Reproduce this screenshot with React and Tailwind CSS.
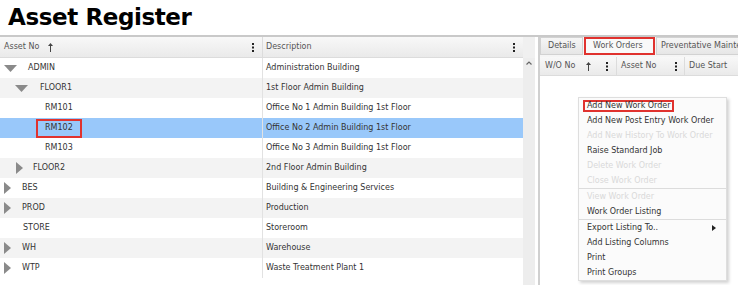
import React from 'react';

const rows = [
    { id: 'ADMIN', desc: 'Administration Building', icon: 'down', pad: 'pl-[4px]', gap: 'ml-[11px]' },
    { id: 'FLOOR1', desc: '1st Floor Admin Building', icon: 'down', pad: 'pl-[15px]', gap: 'ml-[12px]' },
    { id: 'RM101', desc: 'Office No 1 Admin Building 1st Floor', icon: null, pad: 'pl-[45px]', gap: '' },
    { id: 'RM102', desc: 'Office No 2 Admin Building 1st Floor', icon: null, pad: 'pl-[36px]', gap: '', selected: true },
    { id: 'RM103', desc: 'Office No 3 Admin Building 1st Floor', icon: null, pad: 'pl-[45px]', gap: '' },
    { id: 'FLOOR2', desc: '2nd Floor Admin Building', icon: 'right', pad: 'pl-[16px]', gap: 'ml-[10px]' },
    { id: 'BES', desc: 'Building & Engineering Services', icon: 'right', pad: 'pl-[4px]', gap: 'ml-[11px]' },
    { id: 'PROD', desc: 'Production', icon: 'right', pad: 'pl-[4px]', gap: 'ml-[11px]' },
    { id: 'STORE', desc: 'Storeroom', icon: null, pad: 'pl-[23px]', gap: '' },
    { id: 'WH', desc: 'Warehouse', icon: 'right', pad: 'pl-[4px]', gap: 'ml-[11px]' },
    { id: 'WTP', desc: 'Waste Treatment Plant 1', icon: 'right', pad: 'pl-[4px]', gap: 'ml-[11px]' },
];

const menuItems = [
    { label: 'Add New Work Order', boxed: true },
    { label: 'Add New Post Entry Work Order' },
    { label: 'Add New History To Work Order', disabled: true },
    { label: 'Raise Standard Job' },
    { label: 'Delete Work Order', disabled: true },
    { label: 'Close Work Order', disabled: true },
    { sep: true },
    { label: 'View Work Order', disabled: true },
    { label: 'Work Order Listing' },
    { sep: true },
    { label: 'Export Listing To..', arrow: true },
    { label: 'Add Listing Columns' },
    { label: 'Print' },
    { label: 'Print Groups' },
];

function Kebab() {
    return (
        <svg width="2" height="9" viewBox="0 0 2 9" className="shrink-0">
            <rect x="0" y="0" width="2" height="2" fill="#222" />
            <rect x="0" y="3.5" width="2" height="2" fill="#222" />
            <rect x="0" y="7" width="2" height="2" fill="#222" />
        </svg>
    );
}

function SortArrow() {
    return (
        <svg width="5" height="9" viewBox="0 0 5 9" className="shrink-0">
            <line x1="2.5" y1="2" x2="2.5" y2="9" stroke="#444" strokeWidth="1" />
            <polygon points="0,3 2.5,0 5,3" fill="#444" />
        </svg>
    );
}

function TreeIcon({ type }) {
    if (type === 'down') {
        return (
            <svg width="13" height="7" viewBox="0 0 13 7" className="shrink-0">
                <polygon points="0,0 13,0 6.5,7" fill="#8a8a8a" />
            </svg>
        );
    }
    return (
        <svg width="7" height="12" viewBox="0 0 7 12" className="shrink-0">
            <polygon points="0,0 7,6 0,12" fill="#8a8a8a" />
        </svg>
    );
}

function AssetRow({ row, index }) {
    const bg = row.selected ? 'bg-[#99c8fa]' : index % 2 === 1 ? 'bg-[#f3f3f3]' : 'bg-white';
    return (
        <div className={`flex h-[20px] items-center ${bg}`}>
            <div className={`flex h-full w-[263px] shrink-0 items-center border-r border-[#e2e2e2] ${row.pad}`}>
                {row.icon && <TreeIcon type={row.icon} />}
                {row.selected ? (
                    <span className="flex h-[19px] w-[46px] items-center border-2 border-[#e0322e] pl-[7px]">{row.id}</span>
                ) : (
                    <span className={row.gap}>{row.id}</span>
                )}
            </div>
            <div className="flex-1 pl-[3px]">{row.desc}</div>
        </div>
    );
}

function ContextMenu() {
    return (
        <div className="absolute left-[578px] top-[97px] w-[149px] border border-[#dedede] bg-[#fbfbfb] shadow-[2px_2px_3px_rgba(0,0,0,0.18)]">
            {menuItems.map((item, i) =>
                item.sep ? (
                    <div key={i} className="h-px bg-[#dcdcdc]" />
                ) : (
                    <div key={i} className={`flex h-[15px] items-center ${item.disabled ? 'text-[#d9d9d9]' : 'text-[#333]'}`}>
                        {item.boxed ? (
                            <span className="ml-[4px] flex h-[12px] w-[91px] items-center border-2 border-[#e0322e] pl-[2px]">{item.label}</span>
                        ) : (
                            <span className="pl-[8px]">{item.label}</span>
                        )}
                        {item.arrow && (
                            <svg width="4" height="6" viewBox="0 0 4 6" className="ml-auto mr-[10px]">
                                <polygon points="0,0 4,3 0,6" fill="#222" />
                            </svg>
                        )}
                    </div>
                )
            )}
        </div>
    );
}

export default function App() {
    return (
        <div className="relative h-[285px] w-[738px] overflow-hidden bg-white font-['DejaVu_Sans',sans-serif] text-[8px] text-[#333]">
            <h1 className="h-[35px] pl-[8px] text-[23px] font-bold leading-[35px] tracking-[-0.4px] text-black">Asset Register</h1>

            <div className="flex border-t-2 border-[#c9c9c9]">
                {/* asset tree grid */}
                <div className="w-[523px] shrink-0">
                    <div className="flex h-[21px] items-center border-b border-[#dcdcdc] bg-linear-to-b from-[#f8f8f8] to-[#eaeaea] text-[#555]">
                        <div className="flex h-full w-[263px] shrink-0 items-center border-r border-[#dcdcdc] pl-[4px]">
                            <span>Asset No</span>
                            <span className="ml-[9px]"><SortArrow /></span>
                            <span className="ml-auto mr-[8px]"><Kebab /></span>
                        </div>
                        <div className="flex h-full flex-1 items-center pl-[3px]">
                            <span>Description</span>
                            <span className="ml-auto mr-[8px]"><Kebab /></span>
                        </div>
                    </div>
                    {rows.map((row, i) => (
                        <AssetRow key={row.id} row={row} index={i} />
                    ))}
                </div>
                <div className="h-[248px] w-[12px] shrink-0 bg-[#ededed]">
                    <div className="h-[21px] bg-[#f0f0f0]" />
                    <svg width="6" height="4" viewBox="0 0 6 4" className="ml-[3px] mt-[3px]">
                        <polyline points="0.5,3.5 3,1 5.5,3.5" fill="none" stroke="#666" strokeWidth="1.2" />
                    </svg>
                </div>
                <div className="w-[3px] shrink-0" />

                {/* work orders panel */}
                <div className="h-[248px] w-[220px] shrink-0 border-l-2 border-[#d0d0d0]">
                    <div className="flex h-[20px] items-start bg-[#f5f5f5] text-[#555]">
                        <div className="flex h-[18px] w-[43px] shrink-0 items-center border border-[#d2d2d2] bg-linear-to-b from-[#f6f6f6] to-[#e6e6e6] pl-[7px]">Details</div>
                        <div className="ml-[1px] flex h-[18px] w-[71px] shrink-0 items-center border-2 border-[#e0322e] bg-[#f9f9f9] pl-[7px]">Work Orders</div>
                        <div className="ml-[1px] flex h-[18px] flex-1 items-center overflow-hidden whitespace-nowrap border border-[#d2d2d2] bg-linear-to-b from-[#f6f6f6] to-[#e6e6e6] pl-[4px]">Preventative Maintenance</div>
                    </div>
                    <div className="flex h-[19px] items-center border-b border-[#dcdcdc] bg-linear-to-b from-[#f8f8f8] to-[#eaeaea] text-[#555]">
                        <div className="flex h-full w-[77px] shrink-0 items-center border-r border-[#dcdcdc] pl-[5px]">
                            <span>W/O No</span>
                            <span className="ml-[11px]"><SortArrow /></span>
                            <span className="ml-auto mr-[8px]"><Kebab /></span>
                        </div>
                        <div className="flex h-full w-[68px] shrink-0 items-center border-r border-[#dcdcdc] pl-[4px]">
                            <span>Asset No</span>
                            <span className="ml-auto mr-[7px]"><Kebab /></span>
                        </div>
                        <div className="flex h-full flex-1 items-center whitespace-nowrap pl-[4px]">Due Start</div>
                    </div>
                    <div className="h-full bg-white" />
                </div>
            </div>

            <ContextMenu />
        </div>
    );
}
